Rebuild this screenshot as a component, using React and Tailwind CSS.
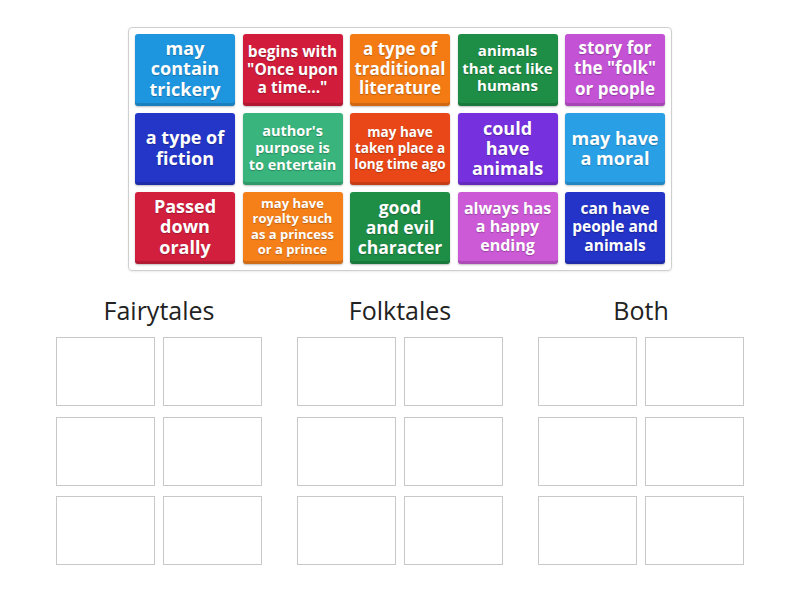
const tiles = [
  { text: 'may\ncontain\ntrickery', bg: 'bg-[#1e96df]', size: 'text-[18px] leading-[20.5px]' },
  { text: 'begins with\n"Once upon\na time..."', bg: 'bg-[#d11d3b]', size: 'text-[15.5px] leading-[18px]' },
  { text: 'a type of\ntraditional\nliterature', bg: 'bg-[#f47b13]', size: 'text-[17px] leading-[19.5px]' },
  { text: 'animals\nthat act like\nhumans', bg: 'bg-[#1e8e47]', size: 'text-[15px] leading-[17.5px]' },
  { text: 'story for\nthe "folk"\nor people', bg: 'bg-[#c352d4]', size: 'text-[17px] leading-[20.5px]' },
  { text: 'a type of\nfiction', bg: 'bg-[#2336c7]', size: 'text-[18px] leading-[21px]' },
  { text: "author's\npurpose is\nto entertain", bg: 'bg-[#38b47c]', size: 'text-[14.5px] leading-[17px]' },
  { text: 'may have\ntaken place a\nlong time ago', bg: 'bg-[#e94717]', size: 'text-[13.5px] leading-[16px]' },
  { text: 'could\nhave\nanimals', bg: 'bg-[#7630de]', size: 'text-[18px] leading-[20px]' },
  { text: 'may have\na moral', bg: 'bg-[#29a0e6]', size: 'text-[18px] leading-[20px]' },
  { text: 'Passed\ndown\norally', bg: 'bg-[#d31f3e]', size: 'text-[18px] leading-[20.5px]' },
  { text: 'may have\nroyalty such\nas a princess\nor a prince', bg: 'bg-[#f5801a]', size: 'text-[13px] leading-[15.3px]' },
  { text: 'good\nand evil\ncharacter', bg: 'bg-[#1e8e47]', size: 'text-[17.5px] leading-[20px]' },
  { text: 'always has\na happy\nending', bg: 'bg-[#cc5ad6]', size: 'text-[16px] leading-[18.5px]' },
  { text: 'can have\npeople and\nanimals', bg: 'bg-[#2433c8]', size: 'text-[15.5px] leading-[18.5px]' },
];

const groups = ['Fairytales', 'Folktales', 'Both'];

const Tile = ({ tile }) => (
  <div
    className={`${tile.bg} ${tile.size} h-[72px] rounded-[3px] flex items-center justify-center text-center px-1 pb-[3px] whitespace-pre-line font-bold text-white shadow-[inset_0_-3px_0_rgba(0,0,0,0.15),0_1px_2px_rgba(0,0,0,0.25)] [text-shadow:0_1px_1px_rgba(0,0,0,0.25)]`}
  >
    {tile.text}
  </div>
);

export default function App() {
  return (
    <div className="w-[800px] h-[600px] bg-white font-['Open_Sans',sans-serif] pt-[27px]">
      <div className="mx-auto w-[544px] border border-[#cfcfcf] rounded-[4px] p-[6px] grid grid-cols-5 gap-x-[7.5px] gap-y-[7px] shadow-[0_1px_2px_rgba(0,0,0,0.08)]">
        {tiles.map((t, i) => (
          <Tile key={i} tile={t} />
        ))}
      </div>

      <div className="flex justify-center gap-[35px] mt-[21px]">
        {groups.map((g) => (
          <div key={g} className="w-[206px]">
            <div className="text-center text-[25px] leading-[36px] text-[#222]">{g}</div>
            <div className="grid grid-cols-2 gap-x-[8px] gap-y-[10.5px] mt-[9px]">
              {Array.from({ length: 6 }).map((_, i) => (
                <div key={i} className="h-[69px] border border-[#c8c8c8]" />
              ))}
            </div>
          </div>
        ))}
      </div>
    </div>
  );
}
